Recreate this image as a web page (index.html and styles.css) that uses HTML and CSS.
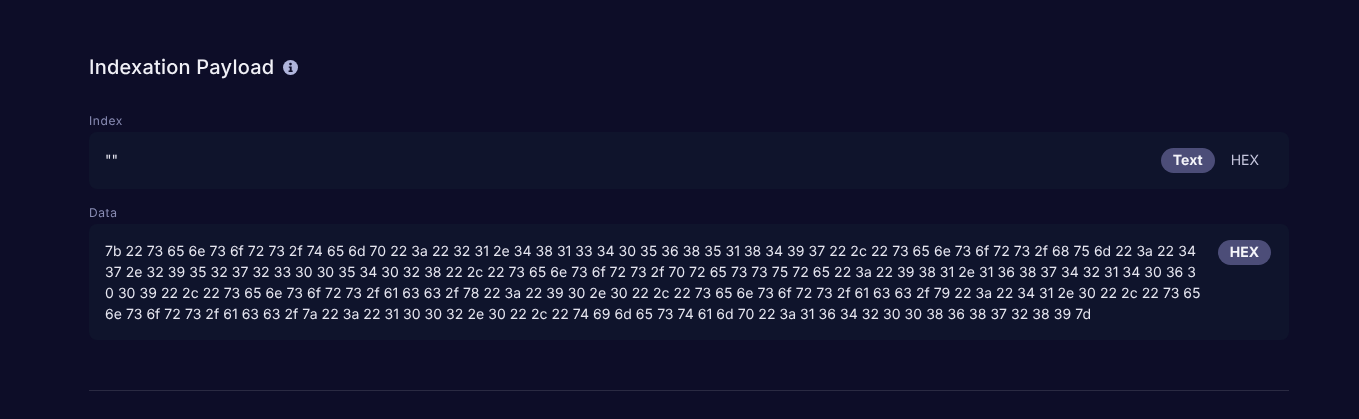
FILE: index.html
```html
<!DOCTYPE html>
<html>
<head lang="en">
    <meta charset="UTF-8">
    <title>Indexation Payload</title>
    <link rel="stylesheet" href="styles.css">
</head>
<body>
<div class="section">
    <div class="section-head">
        <h2>Indexation Payload</h2>
        <svg class="info-icon" viewBox="0 0 14 14" width="15" height="15">
            <circle cx="7" cy="7" r="7" fill="#b0b5dc"/>
            <circle cx="7" cy="3.8" r="1.25" fill="#0d0d28"/>
            <path d="M5.4 6h2.7v3.9h0.9v1.3H5.2V9.900h1.100V7.300H5.400z" fill="#0d0d28"/>
        </svg>
    </div>
    <div class="label">Index</div>
    <div class="box box-index">
        <div class="value">""</div>
        <div class="toggle">
            <span class="pill">Text</span>
            <span class="plain">HEX</span>
        </div>
    </div>
    <div class="label">Data</div>
    <div class="box box-data">
        <div class="value value-data">7b 22 73 65 6e 73 6f 72 73 2f 74 65 6d 70 22 3a 22 32 31 2e 34 38 31 33 34 30 35 36 38 35 31 38 34 39 37 22 2c 22 73 65 6e 73 6f 72 73 2f 68 75 6d 22 3a 22 34 37 2e 32 39 35 32 37 32 33 30 30 35 34 30 32 38 22 2c 22 73 65 6e 73 6f 72 73 2f 70 72 65 73 73 75 72 65 22 3a 22 39 38 31 2e 31 36 38 37 34 32 31 34 30 36 30 30 39 22 2c 22 73 65 6e 73 6f 72 73 2f 61 63 63 2f 78 22 3a 22 39 30 2e 30 22 2c 22 73 65 6e 73 6f 72 73 2f 61 63 63 2f 79 22 3a 22 34 31 2e 30 22 2c 22 73 65 6e 73 6f 72 73 2f 61 63 63 2f 7a 22 3a 22 31 30 30 32 2e 30 22 2c 22 74 69 6d 65 73 74 61 6d 70 22 3a 31 36 34 32 30 30 38 36 38 37 32 38 39 7d</div>
        <span class="pill pill-data">HEX</span>
    </div>
    <div class="divider"></div>
</div>
</body>
</html>
```

FILE: styles.css
```css
html, body {
    margin: 0;
    height: 100%;
    background: #0d0d28;
    overflow: hidden;
}
body {
    font-family: "Inter", "Liberation Sans", sans-serif;
    text-rendering: geometricPrecision;
}
.section {
    padding: 53px 70px 0 89px;
    will-change: transform;
}
.section-head {
    display: flex;
    align-items: center;
    gap: 9px;
    height: 28px;
    margin-bottom: 32px;
}
.section-head h2 {
    margin: 0;
    color: #f0f0f6;
    font-size: 20px;
    font-weight: 500;
    line-height: 27px;
    letter-spacing: 0.22px;
}
.label {
    color: #8a8db5;
    font-size: 12px;
    line-height: 16px;
    letter-spacing: 0.6px;
    margin-bottom: 3px;
}
.box {
    background: #0f142c;
    border-radius: 8px;
    display: flex;
    margin-bottom: 16px;
}
.box-index {
    height: 57px;
    align-items: center;
    justify-content: space-between;
    padding: 0 30px 0 16px;
}
.box-data {
    height: 116px;
    box-sizing: border-box;
    padding: 16px 18px 0 16px;
    justify-content: space-between;
    margin-bottom: 50px;
}
.value {
    color: #e6e6f0;
    font-size: 14px;
    line-height: 21px;
    letter-spacing: 0.054px;
}
.value-data {
    width: 1096px;
    margin-top: 1px;
    word-break: break-all;
}
.toggle {
    display: flex;
    align-items: center;
    gap: 16px;
}
.pill {
    background: #4c4d78;
    border-radius: 13px;
    color: #f5f5fa;
    font-size: 14px;
    font-weight: 700;
    line-height: 25px;
    height: 25px;
    padding: 0 12px;
}
.plain {
    color: #c4c5dc;
    font-size: 14px;
    line-height: 20px;
}
.divider {
    height: 1px;
    background: #2a2a42;
}
```
